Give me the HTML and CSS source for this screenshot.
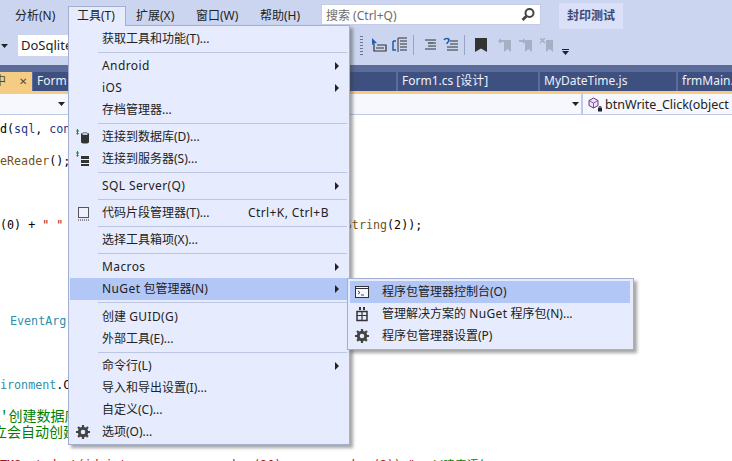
FILE: index.html
```html
<!DOCTYPE html>
<html lang="zh">
<head>
<meta charset="utf-8">
<title>工具菜单</title>
<link rel="stylesheet" href="styles.css">
</head>
<body>
<div class="app">
  <header class="menubar">
    <span class="top-item first">分析(N)</span>
    <span class="top-item active">工具(T)</span>
    <span class="top-item ext">扩展(X)</span>
    <span class="top-item win">窗口(W)</span>
    <span class="top-item help">帮助(H)</span>
    <div class="search">
      <span>搜索 (Ctrl+Q)</span>
      <svg width="16" height="16" viewBox="0 0 16 16"><circle cx="9.5" cy="6" r="4" fill="none" stroke="#444" stroke-width="2"/><path d="M6.5 9 2.5 13" stroke="#444" stroke-width="2.6"/></svg>
    </div>
    <div class="seal">封印测试</div>
  </header>

  <div class="toolbar">
    <svg class="dd" width="7" height="4" viewBox="0 0 7 4"><path d="M0 0h7L3.5 4z" fill="#222"/></svg>
    <div class="combo">DoSqlite</div>
    <div class="tools">
      <span class="grip"></span>
      <svg width="16" height="16" viewBox="0 0 16 16"><path d="M1 1v7l2-1.5L6 6z" fill="#1c5fa8"/><path d="M3 7v7h12V8H6" fill="none" stroke="#333" stroke-width="1.2"/><path d="M5 11h8" stroke="#333"/></svg>
      <svg width="16" height="16" viewBox="0 0 16 16"><path d="M1 4h3M1 4v9h3" fill="none" stroke="#1c5fa8" stroke-width="1.5"/><path d="M6 1h9M6 1v14M8 4h7M8 7h7M8 10h7M8 13h7" stroke="#333" fill="none"/></svg>
      <span class="tsep"></span>
      <svg width="14" height="14" viewBox="0 0 14 14"><path d="M1 2h11M4 5h8M4 8h8M1 11h11" stroke="#333"/><path d="M4 5h5" stroke="#1b7f4c"/></svg>
      <svg width="16" height="16" viewBox="0 0 16 16"><path d="M1 3c1-2 5-2 5 0 0 2-2 2-2 4" fill="none" stroke="#1c5fa8" stroke-width="1.6"/><path d="M7 4h8M7 7h8M4 10h11M4 13h11" stroke="#333"/></svg>
      <span class="tsep"></span>
      <svg width="12" height="14" viewBox="0 0 12 14"><path d="M0 0h12v14L6 10.500 0 14z" fill="#333"/></svg>
      <svg class="off first-off" width="14" height="14" viewBox="0 0 14 14"><path d="M6 2h7v12l-3.500-3L6 14z" fill="#a7afc4"/><path d="M0 3l3-3v2h3v2H3v2z" fill="#a7afc4"/></svg>
      <svg class="off" width="14" height="14" viewBox="0 0 14 14"><path d="M6 2h7v12l-3.500-3L6 14z" fill="#a7afc4"/><path d="M7 3L4 0v2H0v2h4v2z" fill="#a7afc4"/></svg>
      <svg class="off" width="14" height="14" viewBox="0 0 14 14"><path d="M6 2h7v12l-3.500-3L6 14z" fill="#a7afc4"/><path d="M0 0l5 5M5 0L0 5" stroke="#a7afc4" stroke-width="1.500"/></svg>
      <svg class="more" width="7" height="6" viewBox="0 0 7 6"><path d="M0 0h7v1H0zM0 2h7L3.500 6z" fill="#222"/></svg>
    </div>
  </div>

  <nav class="tabs">
    <div class="tab pinned"><span class="pin">中</span><span class="close">✕</span></div>
    <div class="tab form">Form</div>
    <div class="tab design">Form1.cs [设计]</div>
    <div class="tab date">MyDateTime.js</div>
    <div class="tab main">frmMain.</div>
  </nav>

  <div class="navbar">
    <div class="nav-left">
      <svg width="7" height="4" viewBox="0 0 7 4"><path d="M0 0h7L3.500 4z" fill="#222"/></svg>
    </div>
    <div class="nav-mid">
      <svg width="7" height="4" viewBox="0 0 7 4"><path d="M0 0h7L3.500 4z" fill="#222"/></svg>
    </div>
    <div class="nav-right">
      <svg width="15" height="15" viewBox="0 0 15 15"><path d="M5.500 1 10 3.500v5L5.500 11 1 8.500v-5z" fill="#efe6f5" stroke="#6c2f91"/><path d="M1 3.500l4.500 2.500L10 3.500M5.500 6v5" fill="none" stroke="#6c2f91" stroke-width=".8"/><path d="M10 11h4v3.500h-4z" fill="#222"/><path d="M11 11v-1.200h2V11" fill="none" stroke="#222"/></svg>
      <span>btnWrite_Click(object</span>
    </div>
  </div>

  <main class="code">
    <div class="line"><span class="plain">d(</span><span class="var">sql</span><span class="plain">, </span><span class="var">conn</span><span class="plain">);</span></div>
    <div class="line"></div>
    <div class="line"><span class="fn">eReader</span><span class="plain">();</span></div>
    <div class="line"></div>
    <div class="line"></div>
    <div class="line"></div>
    <div class="line"><span class="plain">(0) + </span><span class="str">" "</span><span class="plain"> + reader.GetInt64(1) + " " + reader.Get</span><span class="fn">String</span><span class="plain">(2));</span></div>
    <div class="line"></div>
    <div class="line"></div>
    <div class="line"></div>
    <div class="line"></div>
    <div class="line"></div>
    <div class="line indent"><span class="type">EventArg</span></div>
    <div class="line"></div>
    <div class="line"></div>
    <div class="line"></div>
    <div class="line"><span class="type">ironment</span><span class="plain">.CurrentDirectory</span></div>
    <div class="line"></div>
    <div class="line cmt">'创建数据库</div>
    <div class="line cmt clip">立会自动创建</div>
    <div class="line"></div>
    <div class="line"><span class="str">TMS student(id int, username varchar(20), sex varchar(2)) ";</span> <span class="cmt">//建表语句</span></div>
  </main>
</div>

<div class="menu tools-menu">
  <div class="item">获取工具和功能(T)...</div>
  <div class="sep"></div>
  <div class="item sub"><span class="lat">Android</span></div>
  <div class="item sub"><span class="lat">iOS</span></div>
  <div class="item">存档管理器...</div>
  <div class="sep"></div>
  <div class="item">
    <svg class="ico" width="16" height="16" viewBox="0 0 16 16"><path d="M1 2h3M2.500 0v4" stroke="#1b8a3c" stroke-width="1"/><path d="M1 4l1.500 2L4 4z" fill="#1b8a3c"/><path d="M6 5c0-2 8-2 8 0v8c0 2-8 2-8 0z" fill="#333"/><ellipse cx="10" cy="5" rx="3" ry="1" fill="#cfd6ea"/></svg>
    连接到数据库(D)...
  </div>
  <div class="item">
    <svg class="ico" width="16" height="16" viewBox="0 0 16 16"><path d="M1 2h3M2.500 0v4" stroke="#1b8a3c" stroke-width="1"/><path d="M1 4l1.500 2L4 4z" fill="#1b8a3c"/><path d="M6 5h8v3H6zM6 9h8v3H6zM6 13h8v2H6z" fill="#333"/></svg>
    连接到服务器(S)...
  </div>
  <div class="sep"></div>
  <div class="item sub"><span class="lat">SQL Server(Q)</span></div>
  <div class="sep"></div>
  <div class="item">
    <svg class="ico" width="16" height="16" viewBox="0 0 16 16"><rect x="3.500" y="2.500" width="10" height="10" fill="#eef1fc" stroke="#555"/><path d="M3 15h11" stroke="#333" stroke-dasharray="1 1"/></svg>
    代码片段管理器(T)...
    <span class="key lat">Ctrl+K, Ctrl+B</span>
  </div>
  <div class="sep"></div>
  <div class="item">选择工具箱项(X)...</div>
  <div class="sep"></div>
  <div class="item sub"><span class="lat">Macros</span></div>
  <div class="item sub hot"><span class="lat">NuGet</span> 包管理器(N)</div>
  <div class="sep wide"></div>
  <div class="item">创建 <span class="lat">GUID(G)</span></div>
  <div class="item">外部工具(E)...</div>
  <div class="sep"></div>
  <div class="item sub">命令行(L)</div>
  <div class="item">导入和导出设置(I)...</div>
  <div class="item">自定义(C)...</div>
  <div class="item">
    <svg class="ico" width="16" height="16" viewBox="0 0 16 16"><circle cx="8" cy="8" r="3.800" fill="none" stroke="#444" stroke-width="3"/><path d="M8 1v14M1 8h14M3 3l10 10M13 3L3 13" stroke="#444" stroke-width="2.200" stroke-dasharray="2.500 9"/></svg>
    选项(O)...
  </div>
</div>

<div class="menu nuget-menu">
  <div class="item hot">
    <svg class="ico" width="16" height="16" viewBox="0 0 16 16"><rect x="1.500" y="2.500" width="13" height="11" fill="#f5f7fe" stroke="#333"/><path d="M1 4.500h14" stroke="#333"/><path d="M4 7l2 1.500L4 10M7 11h3" fill="none" stroke="#333" stroke-width=".9"/></svg>
    程序包管理器控制台(O)
  </div>
  <div class="item">
    <svg class="ico" width="16" height="16" viewBox="0 0 16 16"><path d="M5 1h2v3H5zM9 1h2v3H9z" fill="#333"/><rect x="3" y="5.500" width="10" height="9" fill="none" stroke="#333" stroke-width="1.500"/><path d="M3 9.500h10M8 5v10" stroke="#333" stroke-width="1.200"/></svg>
    管理解决方案的 <span class="lat">NuGet</span> 程序包(N)...
  </div>
  <div class="item">
    <svg class="ico" width="16" height="16" viewBox="0 0 16 16"><circle cx="8" cy="8" r="3.800" fill="none" stroke="#444" stroke-width="3"/><path d="M8 1v14M1 8h14M3 3l10 10M13 3L3 13" stroke="#444" stroke-width="2.200" stroke-dasharray="2.500 9"/></svg>
    程序包管理器设置(P)
  </div>
</div>
</body>
</html>
```
FILE: styles.css
```css
* { box-sizing: border-box; }
html, body { margin: 0; padding: 0; }
body {
  width: 732px;
  height: 461px;
  overflow: hidden;
  position: relative;
  font-family: "Noto Sans", "Noto Sans CJK SC", sans-serif;
  font-size: 12px;
  color: #222;
  background: #fff;
}
.app { display: flex; flex-direction: column; height: 461px; }

.menubar {
  height: 31px;
  background: #ccd5f0;
  display: flex;
  align-items: flex-start;
  padding-left: 15px;
}
.top-item { height: 19px; margin-top: 6px; line-height: 19px; color: #222; white-space: nowrap; }
.top-item.first { width: 53px; }
.top-item.active {
  width: 58px;
  padding-left: 8px;
  background: #e6ecfd;
  border: 1px solid #a3afd1;
  border-bottom: 0;
  line-height: 18px;
}
.top-item.ext { margin-left: 10px; width: 60px; }
.top-item.win { width: 64px; }
.top-item.help { width: 61px; }
.search {
  width: 220px;
  height: 21px;
  margin-top: 4px;
  background: #fff;
  border: 1px solid #c4cce6;
  display: flex;
  align-items: center;
  justify-content: space-between;
  padding: 0 4px;
  color: #6d6d6d;
}
.seal {
  width: 64px;
  height: 26px;
  margin: 3px 0 0 18px;
  background: #d9e0f7;
  color: #3d4a78;
  font-weight: 700;
  line-height: 26px;
  text-align: center;
}

.toolbar {
  height: 34px;
  background: #ccd5f0;
  display: flex;
  align-items: flex-start;
  padding: 0 0 0 1px;
}
.dd { margin-top: 13px; }
.combo {
  width: 140px;
  height: 21px;
  margin: 4px 0 0 10px;
  padding-left: 3px;
  background: #fff;
  font-size: 13px;
  line-height: 21px;
}
.tools {
  display: flex;
  align-items: center;
  gap: 5px;
  margin: 2px 0 0 202px;
  height: 24px;
}
.grip { width: 3px; height: 20px; margin-right: 3px; background-image: radial-gradient(#6a7390 40%, transparent 45%); background-size: 2px 3px; }
.tsep { width: 1px; height: 20px; background: #98a4c6; margin-right: 5px; }
.off { margin-left: 2px; }
.first-off { margin-left: 6px; }
.more { margin: 14px 0 0 3px; }

.tabs {
  height: 29px;
  background: #5b6b9a;
  padding-top: 7px;
  display: flex;
  gap: 2px;
  border-bottom: 3px solid #f5cc84;
  color: #eef1fa;
  overflow: hidden;
}
.tab { height: 19px; line-height: 18px; background: #3d5080; padding-left: 4px; white-space: nowrap; overflow: hidden; }
.tab.pinned { width: 32px; margin-right: -1px; background: #f5cc84; color: #5a4a20; padding: 0; display: flex; justify-content: space-between; }
.pin { margin-left: -6px; }
.close { padding-right: 5px; font-size: 10px; }
.tab.form { width: 363px; }
.tab.design { width: 140px; }
.tab.date { width: 136px; }
.tab.main { flex: 1; }

.navbar {
  height: 21px;
  display: flex;
  background: #f6f8fe;
  border-bottom: 1px solid #bfcae8;
}
.nav-left { width: 66px; display: flex; align-items: center; justify-content: flex-end; padding-right: 1px; }
.nav-mid { width: 517px; display: flex; align-items: center; justify-content: flex-end; padding-right: 2px; border-right: 2px solid #bfcae8; }
.nav-right { flex: 1; display: flex; align-items: center; gap: 2px; padding-left: 5px; color: #222; font-size: 12.5px; white-space: nowrap; overflow: hidden; }

.code {
  flex: 1;
  padding-top: 6px;
  font-family: "DejaVu Sans Mono", "Noto Sans CJK SC", monospace;
  font-size: 11.7px;
  background: #fff;
  overflow: hidden;
}
.line { height: 16px; line-height: 16px; white-space: pre; }
.indent { padding-left: 10px; }
.plain { color: #000; }
.var { color: #1f377f; }
.fn { color: #74531f; }
.type { color: #2b91af; }
.str { color: #a31515; }
.cmt { color: #008000; }
.line.cmt { font-size: 14px; font-family: "Liberation Mono", "Noto Sans CJK SC", monospace; letter-spacing: 0; }
.clip { margin-left: -7px; }

.menu {
  position: absolute;
  background: #e6ecfd;
  border: 1px solid #a3afd1;
  box-shadow: 3px 3px 3px rgba(60, 60, 60, .45);
  padding: 2px;
}
.tools-menu { left: 68px; top: 25px; width: 282px; height: 420px; }
.tools-menu::before {
  content: "";
  position: absolute;
  left: 0;
  top: -1px;
  width: 56px;
  height: 1px;
  background: #e6ecfd;
}
.nuget-menu { left: 347px; top: 278px; width: 287px; height: 72px; padding-right: 3px; }
.nuget-menu .item { padding-left: 32px; }
.item {
  position: relative;
  height: 22px;
  line-height: 22px;
  padding-left: 31px;
  color: #222;
  white-space: nowrap;
}
.lat { letter-spacing: .4px; }
.item.hot { background: #b3c7f7; }
.tools-menu .item.hot { margin-left: -1px; padding-left: 32px; }
.ico { position: absolute; left: 4px; top: 3px; }
.key { position: absolute; left: 177px; top: 0; }
.sub::after {
  content: "";
  position: absolute;
  right: 8px;
  top: 7px;
  border-left: 4px solid #222;
  border-top: 4px solid transparent;
  border-bottom: 4px solid transparent;
}
.sep { height: 5px; margin-left: 27px; padding-top: 2px; }
.sep::before { content: ""; display: block; height: 1px; background: #bcc6e2; }
.sep.wide { height: 6px; }
```
